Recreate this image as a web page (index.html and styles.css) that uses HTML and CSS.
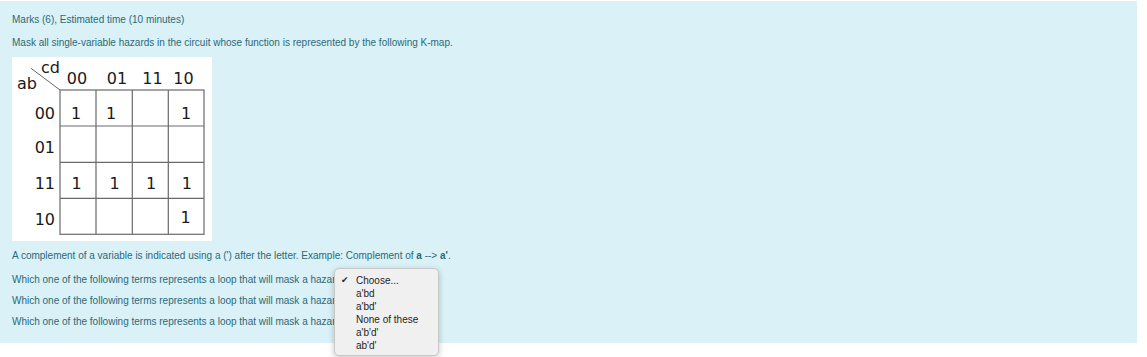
FILE: index.html
```html
<!DOCTYPE html>
<html lang="en">
<head>
<meta charset="utf-8">
<title>Question</title>
<link rel="stylesheet" href="styles.css">
</head>
<body>
<div class="formulation">
  <p class="line marks">Marks (6), Estimated time (10 minutes)</p>
  <p class="line intro">Mask all single-variable hazards in the circuit whose function is represented by the following K-map.</p>
  <svg class="kmap" width="200" height="184" viewBox="0 0 200 184" xmlns="http://www.w3.org/2000/svg">
    <rect x="0" y="0" width="200" height="184" fill="#ffffff"/>
    <g stroke="#6a6a6a" stroke-width="1.2" fill="none">
      <rect x="48" y="33" width="144" height="144.3"/>
      <line x1="84" y1="33" x2="84" y2="177.3"/>
      <line x1="120.3" y1="33" x2="120.3" y2="177.3"/>
      <line x1="156.3" y1="33" x2="156.3" y2="177.3"/>
      <line x1="48" y1="69" x2="192" y2="69"/>
      <line x1="48" y1="105.3" x2="192" y2="105.3"/>
      <line x1="48" y1="141.3" x2="192" y2="141.3"/>
      <line x1="19" y1="11.3" x2="48" y2="33" stroke-width="1"/>
    </g>
    <g font-family="'DejaVu Sans', sans-serif" font-size="16" fill="#1a1a1a">
      <text x="29" y="16">cd</text>
      <text x="5" y="32">ab</text>
      <text x="65" y="26.5" text-anchor="middle">00</text>
      <text x="105" y="26.5" text-anchor="middle">01</text>
      <text x="140.5" y="26.5" text-anchor="middle">11</text>
      <text x="171.5" y="26.5" text-anchor="middle">10</text>
      <text x="43" y="61.5" text-anchor="end">00</text>
      <text x="43" y="95.5" text-anchor="end">01</text>
      <text x="43" y="131.5" text-anchor="end">11</text>
      <text x="43" y="167.5" text-anchor="end">10</text>
      <text x="64" y="61.5" text-anchor="middle">1</text>
      <text x="99" y="61.5" text-anchor="middle">1</text>
      <text x="174" y="61.5" text-anchor="middle">1</text>
      <text x="64.7" y="131.5" text-anchor="middle">1</text>
      <text x="102.5" y="131.5" text-anchor="middle">1</text>
      <text x="139" y="131.5" text-anchor="middle">1</text>
      <text x="174.8" y="131.5" text-anchor="middle">1</text>
      <text x="173.5" y="166" text-anchor="middle">1</text>
    </g>
  </svg>
  <p class="line note">A complement of a variable is indicated using a (') after the letter. Example: Complement of <b>a</b> --&gt; <b>a'</b>.</p>
  <p class="line q">Which one of the following terms represents a loop that will mask a hazard</p>
  <p class="line q">Which one of the following terms represents a loop that will mask a hazard</p>
  <p class="line q">Which one of the following terms represents a loop that will mask a hazard</p>

  <ul class="menu">
    <li class="opt selected">Choose...</li>
    <li class="opt">a'bd</li>
    <li class="opt">a'bd'</li>
    <li class="opt">None of these</li>
    <li class="opt">a'b'd'</li>
    <li class="opt">ab'd'</li>
  </ul>
</div>
</body>
</html>
```
FILE: styles.css
```css
html, body {
  margin: 0;
  padding: 0;
  background: #ffffff;
}

body {
  font-family: "Liberation Sans", Arial, sans-serif;
  min-height: 357px;
}

.formulation {
  position: relative;
  box-sizing: border-box;
  width: 1137px;
  margin-top: 1px;
  padding: 13px 12px 15px;
  background: #d9f1f7;
  color: #2b6a78;
  font-size: 10px;
}

.line {
  margin: 0;
  line-height: 12px;
  white-space: nowrap;
}

.marks {
  margin-bottom: 11px;
}

.intro {
  margin-bottom: 8px;
}

.kmap {
  display: block;
  margin-bottom: 9px;
}

.note {
  margin-bottom: 12px;
}

.note b {
  font-weight: bold;
}

.q {
  margin-bottom: 9px;
}

.q:last-of-type {
  margin-bottom: 0;
}

.menu {
  position: absolute;
  left: 334px;
  top: 267px;
  width: 105px;
  box-sizing: border-box;
  margin: 0;
  padding: 5px 0 3px;
  list-style: none;
  background: #f0f0f0;
  border: 1px solid #c8c8c8;
  border-radius: 5px;
  box-shadow: 0 2px 6px rgba(0, 0, 0, 0.22);
  color: #1e1e1e;
  font-size: 10px;
}

.opt {
  position: relative;
  line-height: 13px;
  padding-left: 21px;
}

.opt.selected::before {
  content: "\2714";
  position: absolute;
  left: 6px;
  top: 0;
  font-family: "DejaVu Sans", sans-serif;
  font-size: 9px;
  color: #2a2a2a;
}
```
